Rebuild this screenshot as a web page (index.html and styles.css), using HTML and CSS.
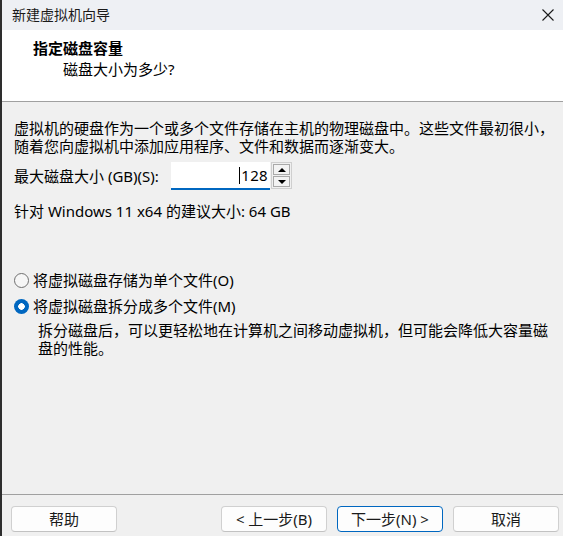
FILE: index.html
```html
<!DOCTYPE html>
<html lang="zh-CN">
<head>
<meta charset="utf-8">
<title>新建虚拟机向导</title>
<link rel="stylesheet" href="styles.css">
</head>
<body>
<div class="window">
  <div class="titlebar">
    <span class="title">新建虚拟机向导</span>
    <svg class="close" width="12" height="12" viewBox="0 0 12 12" aria-hidden="true">
      <path d="M0.5 0.5 L11.5 11.5 M11.5 0.5 L0.5 11.5" stroke="#1a1a1a" stroke-width="1.1" fill="none"/>
    </svg>
  </div>
  <div class="header">
    <div class="h-title">指定磁盘容量</div>
    <div class="h-sub">磁盘大小为多少?</div>
  </div>
  <div class="content">
    <div class="intro">
      <span class="line">虚拟机的硬盘作为一个或多个文件存储在主机的物理磁盘中。这些文件最初很小，</span>
      <span class="line">随着您向虚拟机中添加应用程序、文件和数据而逐渐变大。</span>
    </div>
    <div class="size-row">
      <span class="size-label">最大磁盘大小 (GB)(S):</span>
      <div class="num-input"><span class="caret"></span>128</div>
      <div class="spin">
        <span class="spin-btn"><span class="tri-up"></span></span>
        <span class="spin-btn"><span class="tri-down"></span></span>
      </div>
    </div>
    <p class="recommend">针对 Windows 11 x64 的建议大小: 64 GB</p>
    <div class="radio-row first"><span class="radio"></span>将虚拟磁盘存储为单个文件(O)</div>
    <div class="radio-row"><span class="radio checked"></span>将虚拟磁盘拆分成多个文件(M)</div>
    <div class="radio-desc">
      <span class="line">拆分磁盘后，可以更轻松地在计算机之间移动虚拟机，但可能会降低大容量磁</span>
      <span class="line">盘的性能。</span>
    </div>
  </div>
  <div class="footer">
    <button class="btn">帮助</button>
    <span class="spacer"></span>
    <button class="btn">&lt; 上一步(B)</button>
    <button class="btn default">下一步(N) &gt;</button>
    <button class="btn">取消</button>
  </div>
</div>
</body>
</html>
```
FILE: styles.css
```css
html, body {
  margin: 0;
  padding: 0;
}
body {
  background: #f0f0f0;
  font-family: "Noto Sans", "Noto Sans CJK SC", sans-serif;
  font-size: 15px;
  color: #000;
}
.window {
  width: 563px;
  height: 536px;
  box-sizing: border-box;
  border-left: 2px solid #2e2e2e;
  display: flex;
  flex-direction: column;
  overflow: hidden;
}
.titlebar {
  height: 30px;
  flex: none;
  background: #eef0f4;
  display: flex;
  align-items: center;
  padding-left: 10px;
  padding-right: 9px;
}
.title {
  font-size: 14px;
  line-height: 18px;
  color: #1a1a1a;
}
.close {
  margin-left: auto;
}
.header {
  flex: none;
  height: 72px;
  box-sizing: border-box;
  background: #fff;
  border-bottom: 1px solid #a0a0a0;
  padding: 8px 0 0 31px;
}
.h-title {
  font-weight: bold;
  line-height: 21px;
}
.h-sub {
  line-height: 21px;
  margin-left: 30px;
}
.content {
  flex: 1;
  padding: 17px 0 0 12px;
}
p {
  margin: 0;
}
.line {
  display: block;
  height: 18px;
  line-height: 18px;
  white-space: nowrap;
}
.size-row {
  margin-top: 7px;
  display: flex;
  align-items: flex-start;
  height: 28px;
}
.size-label {
  width: 157px;
  flex: none;
  line-height: 28px;
}
.num-input {
  width: 99px;
  height: 28px;
  box-sizing: border-box;
  background: #fff;
  border-bottom: 2px solid #0067c0;
  text-align: right;
  padding-right: 2px;
  line-height: 26px;
  letter-spacing: 0.3px;
}
.caret {
  display: inline-block;
  width: 1px;
  height: 17px;
  background: #000;
  vertical-align: -3px;
  margin-right: 1px;
}
.spin {
  margin-left: 1px;
  width: 21px;
  height: 27px;
  box-sizing: border-box;
  border: 1px solid #cfcfcf;
  padding: 1px;
  display: flex;
  flex-direction: column;
  gap: 1px;
  background: #f0f0f0;
}
.spin-btn {
  flex: 1;
  border: 1px solid #a9a9a9;
  background: #f3f3f3;
  display: flex;
  align-items: center;
  justify-content: center;
}
.tri-up {
  width: 0;
  height: 0;
  border-left: 4px solid transparent;
  border-right: 4px solid transparent;
  border-bottom: 4px solid #000;
}
.tri-down {
  width: 0;
  height: 0;
  border-left: 4px solid transparent;
  border-right: 4px solid transparent;
  border-top: 4px solid #000;
}
.recommend {
  margin-top: 12px;
  line-height: 18px;
}
.radio-row {
  display: flex;
  align-items: center;
  line-height: 18px;
  margin-top: 8px;
}
.radio-row.first {
  margin-top: 51px;
}
.radio {
  width: 15px;
  height: 15px;
  box-sizing: border-box;
  border-radius: 50%;
  border: 1px solid #6f6f6f;
  background: #f6f6f6;
  margin-right: 4px;
  flex: none;
}
.radio.checked {
  border: none;
  background: radial-gradient(circle, #fff 0 3px, #0067c0 3.5px);
}
.radio-desc {
  margin-top: 6px;
  padding-left: 24px;
}
.footer {
  flex: none;
  height: 42px;
  box-sizing: border-box;
  border-top: 1px solid #a0a0a0;
  padding: 11px 4px 0 9px;
  display: flex;
  align-items: flex-start;
  gap: 10px;
}
.spacer {
  flex: 1;
}
.btn {
  width: 106px;
  height: 26px;
  box-sizing: border-box;
  background: #fdfdfd;
  border: 1px solid #d0d0d0;
  border-bottom-color: #c2c2c2;
  border-radius: 4px;
  font-family: "Noto Sans", "Noto Sans CJK SC", sans-serif;
  font-size: 15px;
  line-height: 22px;
  color: #1a1a1a;
  padding: 0;
}
.btn.default {
  border-color: #0067c0;
}
```
